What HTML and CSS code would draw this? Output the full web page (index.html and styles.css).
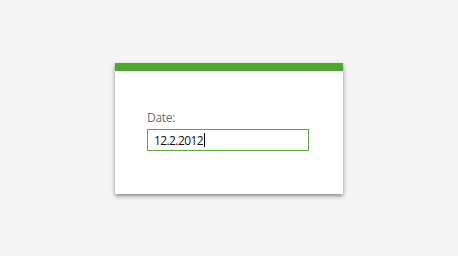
FILE: index.html
```html
<!DOCTYPE html>
<html>
<head>
<meta charset="utf-8">
<link rel="stylesheet" href="styles.css">
</head>
<body>
<div class="card">
  <div class="field">
    <label class="label">Date:</label>
    <div class="input"><span class="value">12.2.2012</span><span class="caret"></span></div>
  </div>
</div>
</body>
</html>
```
FILE: styles.css
```css
html, body {
  margin: 0;
  padding: 0;
  background: #f4f4f4;
  height: 100%;
}
body {
  font-family: "Open Sans", "DejaVu Sans", sans-serif;
}
.card {
  box-sizing: border-box;
  margin: 63px 0 0 115px;
  width: 228px;
  height: 131px;
  background: #fff;
  border-top: 8px solid #4fa72f;
  box-shadow: 0 2px 4px rgba(0,0,0,0.45);
  padding: 39px 0 0 32px;
}
.field {
  display: flex;
  flex-direction: column;
  gap: 3px;
}
.label {
  font-size: 12px;
  line-height: 16px;
  color: #6e6e6e;
  letter-spacing: -0.3px;
}
.input {
  box-sizing: border-box;
  width: 162px;
  height: 22px;
  border: 1px solid #5aab3b;
  display: flex;
  align-items: center;
  padding-left: 6px;
  font-size: 12px;
  color: #111;
  letter-spacing: -0.6px;
}
.caret {
  display: inline-block;
  width: 1px;
  height: 14px;
  background: #000;
  margin-left: 1px;
}
```
